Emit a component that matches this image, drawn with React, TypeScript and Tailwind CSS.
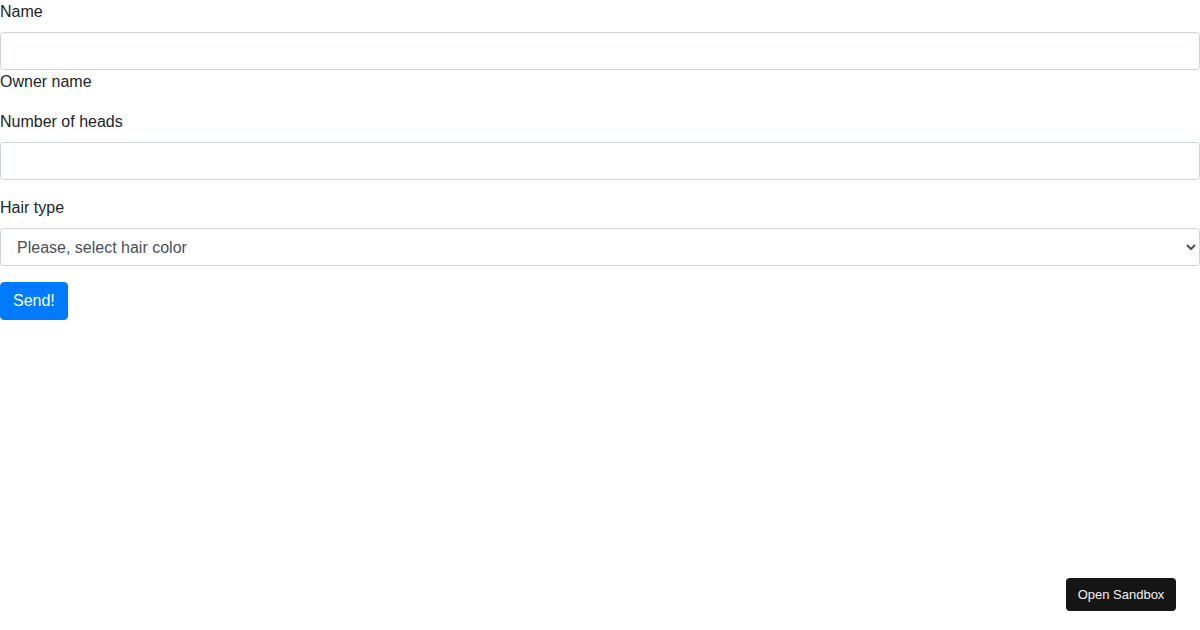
import { useState } from "react";

const inputClass =
  "block w-full h-[38px] px-3 py-1.5 text-base leading-6 text-[#495057] bg-white border border-[#ced4da] rounded";

export default function App() {
  const [hair, setHair] = useState("");

  return (
    <div className="min-h-[630px] bg-white font-['Liberation_Sans',Arial,sans-serif] text-base leading-6 text-[#212529]">
      <form onSubmit={(e) => e.preventDefault()}>
        <div>
          <label className="inline-block mb-2">Name</label>
          <input type="text" className={inputClass} />
        </div>
        <div className="mb-4">
          <label className="inline-block">Owner name</label>
        </div>
        <div className="mb-4">
          <label className="inline-block mb-2">Number of heads</label>
          <input type="number" className={inputClass} />
        </div>
        <div className="mb-4">
          <label className="inline-block mb-2">Hair type</label>
          <select value={hair} onChange={(e) => setHair(e.target.value)} className={inputClass}>
            <option value="">Please, select hair color</option>
            <option value="blond">Blond</option>
            <option value="brown">Brown</option>
            <option value="black">Black</option>
          </select>
        </div>
        <button
          type="submit"
          className="h-[38px] px-3 py-1.5 text-base leading-6 text-white bg-[#007bff] border border-[#007bff] rounded"
        >
          Send!
        </button>
      </form>

      <button className="fixed right-6 bottom-[19px] h-[33px] w-[110px] rounded bg-[#151515] text-[13px] text-[#f2f2f2] font-['Liberation_Sans',Arial,sans-serif]">
        Open Sandbox
      </button>
    </div>
  );
}
